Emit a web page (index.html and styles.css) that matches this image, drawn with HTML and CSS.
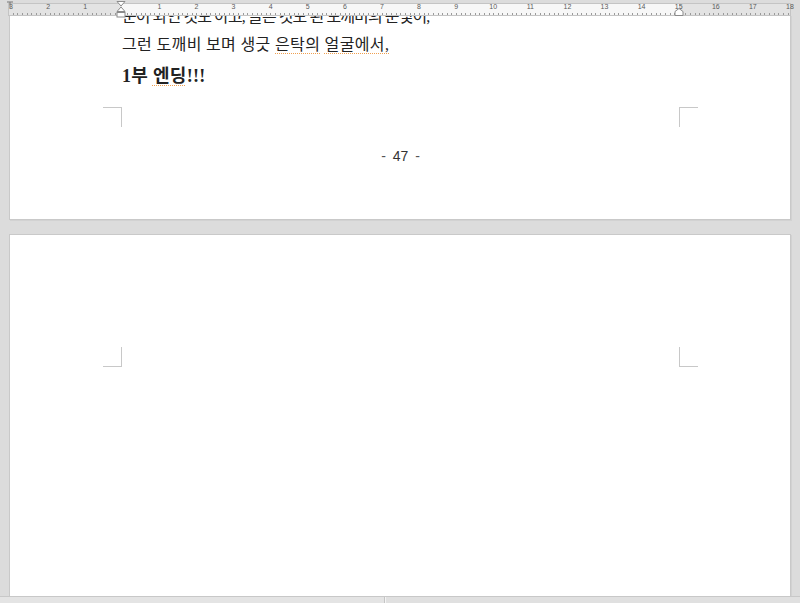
FILE: index.html
```html
<!DOCTYPE html>
<html lang="ko">
<head>
<meta charset="utf-8">
<link rel="stylesheet" href="styles.css">
</head>
<body>
<div class="app">
  <div class="ruler-wrap">
    <div class="ruler">
      <div class="margin-l"></div>
      <div class="text-zone"></div>
      <div class="margin-r"></div>
    </div>
    <div class="labels">
      <span>3</span><span>2</span><span>1</span><span></span><span>1</span><span>2</span><span>3</span><span>4</span><span>5</span><span>6</span><span>7</span><span>8</span><span>9</span><span>10</span><span>11</span><span>12</span><span>13</span><span>14</span><span>15</span><span>16</span><span>17</span><span>18</span>
    </div>
    <svg class="indent-l" width="10" height="17" viewBox="0 0 10 17">
      <path d="M1 0.5 H9 L5 5 Z" fill="#fff" stroke="#8a8a8a"/>
      <path d="M5 6 L9 10.5 H1 Z" fill="#fff" stroke="#8a8a8a"/>
      <rect x="1" y="11.5" width="8" height="4.5" fill="#fff" stroke="#8a8a8a"/>
    </svg>
    <svg class="indent-r" width="10" height="8" viewBox="0 0 10 8">
      <path d="M1 7.5 V3.5 L5 0.5 L9 3.5 V7.5 Z" fill="#fff" stroke="#8a8a8a"/>
    </svg>
    <svg class="tab-sel" width="8" height="8" viewBox="0 0 8 8">
      <path d="M1 1 H7 M4 1 V7" stroke="#777" stroke-width="1" fill="none"/>
    </svg>
  </div>
  <div class="doc">
    <div class="page page-one">
      <div class="body-text">
        <p class="line first">눈이 와인 것도 아고, 슬픈 것도 된 도깨비의 눈빛이,</p>
        <p class="line">그런 도깨비 보며 생긋 <span class="spell">은탁의</span> <span class="spell">얼굴에서,</span></p>
        <p class="line bold">1부 <span class="spell">엔딩</span>!!!</p>
      </div>
      <div class="marks bottom-marks">
        <div class="mark mark-bl"></div>
        <div class="mark mark-br"></div>
      </div>
      <div class="page-num">- <span>47</span> -</div>
    </div>
    <div class="page page-two">
      <div class="marks top-marks">
        <div class="mark mark-tl"></div>
        <div class="mark mark-tr"></div>
      </div>
    </div>
  </div>
  <div class="hbar">
    <div class="hbar-left"></div>
    <div class="hbar-right"></div>
  </div>
</div>
</body>
</html>
```
FILE: styles.css
```css
* { box-sizing: border-box; }
html, body { margin: 0; padding: 0; }
body {
  width: 800px;
  height: 603px;
  overflow: hidden;
  background: #dcdcdc;
  font-family: "Liberation Serif", "Noto Sans CJK KR", serif;
}
.app {
  width: 800px;
  height: 603px;
  display: flex;
  flex-direction: column;
  position: relative;
}
.ruler-wrap {
  height: 15px;
  position: relative;
  z-index: 2;
  flex: none;
  background: #dcdcdc;
}
.ruler {
  position: absolute;
  left: 8px;
  top: 3px;
  width: 783px;
  height: 13px;
  display: flex;
  border: 1px solid #c4c4c4;
  background-color: #e3e3e3;
  background-image: repeating-linear-gradient(to right, transparent 0, transparent 3.64px, #9a9a9a 3.64px, #9a9a9a 4.64px);
  background-size: 100% 2px;
  background-position: 0 9px;
  background-repeat: no-repeat;
}
.margin-l { width: 113px; }
.text-zone {
  width: 557px;
  background-color: #f7f7f7;
  background-image: repeating-linear-gradient(to right, transparent 0, transparent 3.64px, #9a9a9a 3.64px, #9a9a9a 4.64px);
  background-size: 100% 2px;
  background-position: 0.6px 9px;
  background-repeat: no-repeat;
}
.margin-r { flex: 1; }
.labels {
  position: absolute;
  left: -7.55px;
  top: 3px;
  display: flex;
  font-family: "Liberation Sans", sans-serif;
  font-size: 7px;
  line-height: 8px;
  color: #5a5a5a;
}
.labels span {
  width: 37.1px;
  text-align: center;
}
.indent-l { position: absolute; left: 116px; top: 1px; }
.indent-r { position: absolute; left: 674px; top: 8px; }
.tab-sel { position: absolute; left: 6px; top: 1px; }

.doc {
  flex: 1;
  overflow: hidden;
  position: relative;
  z-index: 1;
}
.page {
  display: flow-root;
  width: 782px;
  margin-left: 9px;
  background: #fff;
  border: 1px solid #c9c9c9;
  box-shadow: 1px 1px 0 #d2d2d2;
}
.page-one {
  height: 205px;
  border-top: none;
}
.page-two {
  margin-top: 14px;
  height: 420px;
  padding-top: 112px;
}
.body-text {
  padding-left: 112px;
  color: #222;
  margin-top: -12px;
}
.line {
  margin: 0;
  font-size: 16px;
  line-height: 28px;
  white-space: nowrap;
  letter-spacing: 0.35px;
}
.line.first { letter-spacing: -0.9px; }
.line.bold {
  font-size: 18px;
  font-weight: bold;
  line-height: 34px;
  letter-spacing: 0.3px;
}
.spell {
  text-decoration: underline dotted #f0a050;
  text-decoration-thickness: 1px;
  text-underline-offset: 3px;
}
.marks {
  display: flex;
  justify-content: space-between;
  padding: 0 92px 0 93px;
}
.bottom-marks { margin-top: 14px; }
.mark {
  width: 19px;
  height: 20px;
}
.mark-bl { border-top: 1px solid #c8c8c8; border-right: 1px solid #c8c8c8; }
.mark-br { border-top: 1px solid #c8c8c8; border-left: 1px solid #c8c8c8; }
.mark-tl { border-bottom: 1px solid #c8c8c8; border-right: 1px solid #c8c8c8; }
.mark-tr { border-bottom: 1px solid #c8c8c8; border-left: 1px solid #c8c8c8; }
.page-num {
  margin-top: 21px;
  text-align: center;
  font-family: "Liberation Sans", sans-serif;
  font-size: 14px;
  line-height: 16px;
  color: #555;
  word-spacing: 3px;
  padding-left: 1px;
}
.page-num span { color: #333; }

.hbar {
  flex: none;
  height: 7px;
  display: flex;
  border-top: 1px solid #c8c8c8;
  background: #e4e4e4;
}
.hbar-left { width: 385px; border-right: 1px solid #c4c4c4; }
.hbar-right { flex: 1; border-left: 1px solid #f4f4f4; background: #e0e0e0; }
```
